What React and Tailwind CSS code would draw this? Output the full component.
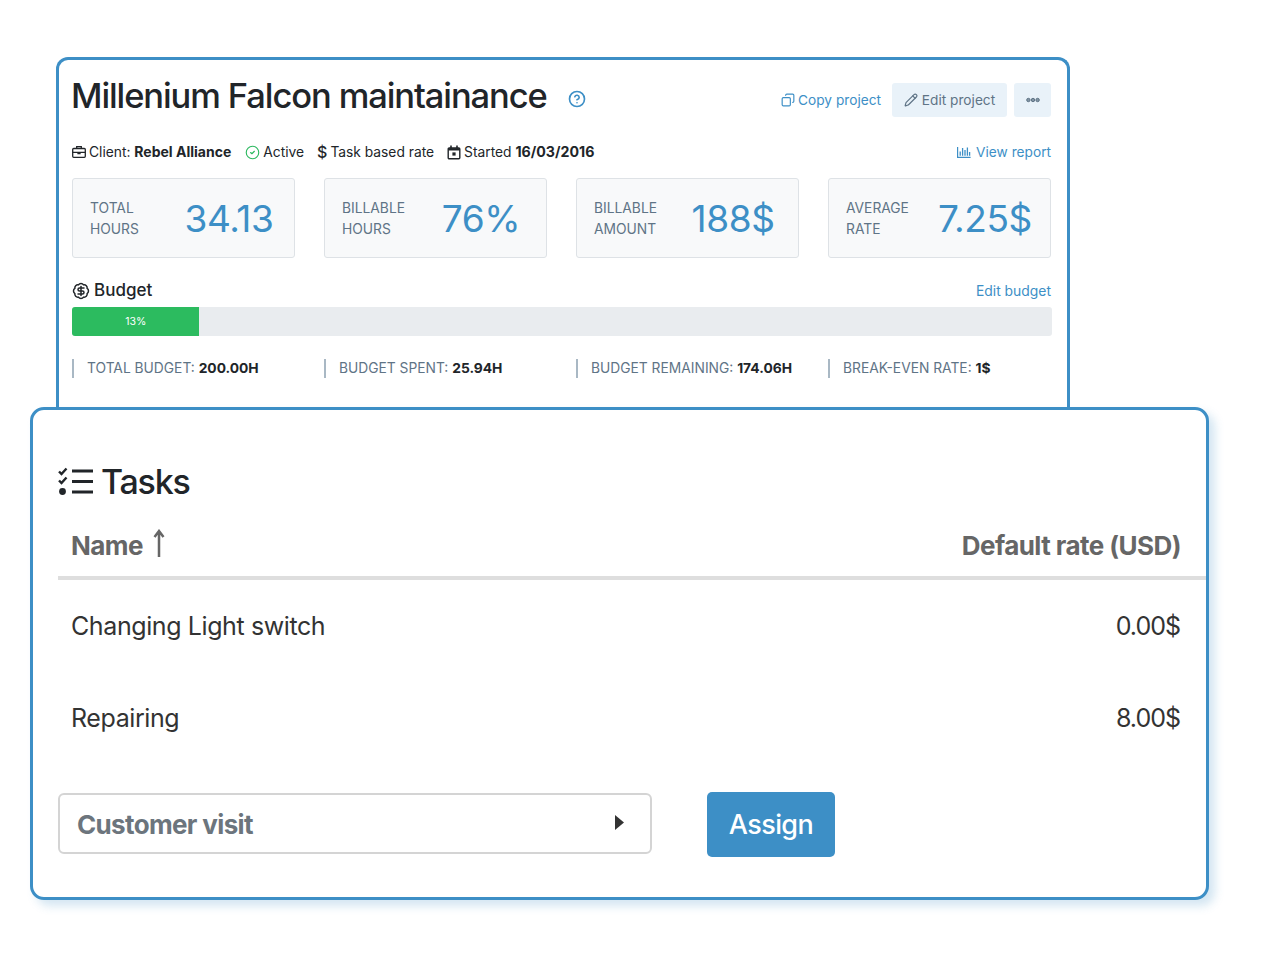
import React from "react";
import { CircleCheck, Copy, Pencil, CircleHelp, BadgeDollarSign } from "lucide-react";

function Stat({ a, b, v }) {
  return (
    <div className="w-[223px] h-[80px] bg-[#f8f9fa] border border-[#dee2e6] rounded-[3px] flex items-center">
      <div className="w-[91px] pl-[17px] pt-[2px] text-[13.8px] leading-[21px] text-[#5f7486]">
        <div>{a}</div>
        <div>{b}</div>
      </div>
      <div className="flex-1 pt-[1px] text-center text-[37px] leading-none tracking-[-0.4px] text-[#3d8fc6]">{v}</div>
    </div>
  );
}

function Fact({ label, value }) {
  return (
    <div className="w-[252px] shrink-0 h-[20px] flex items-center">
      <div className="w-[2px] h-[19px] bg-[#a9b8c4]" />
      <div className="ml-[13px] text-[13.8px] text-[#5f7486] whitespace-nowrap">
        {label}: <b className="font-bold text-[#212529]">{value}</b>
      </div>
    </div>
  );
}

function ChecklistIcon() {
  return (
    <svg width="36" height="30" viewBox="0 0 36 30" fill="none" stroke="#212529" strokeWidth="3">
      <path d="M1 4.5l2.5 2.5L8.5 1.5" strokeWidth="2.4" />
      <path d="M1 13.5l2.5 2.5 5-5.5" strokeWidth="2.4" />
      <circle cx="4.5" cy="24.5" r="3.4" fill="#212529" stroke="none" />
      <path d="M14 4h21M14 14.5h21M14 25h21" />
    </svg>
  );
}

function CaseIcon() {
  return (
    <svg className="mr-[3px]" width="14" height="14" viewBox="0 0 14 14" fill="none" stroke="#212529" strokeWidth="1.3">
      <rect x="0.7" y="3.5" width="12.6" height="8.8" rx="1" />
      <path d="M4.7 3.5V1.7h4.6v1.8M0.7 7.3h12.6M6 7.3v1.4h2V7.3" />
    </svg>
  );
}

function CalIcon() {
  return (
    <svg className="mr-[3px]" width="14" height="15" viewBox="0 0 14 15" fill="none" stroke="#212529" strokeWidth="1.4">
      <rect x="1.2" y="3" width="11.6" height="10.8" rx="1" />
      <path d="M1.2 4.3h11.6" strokeWidth="2.4" />
      <path d="M4 0.6v2.6M10 0.6v2.6" strokeWidth="1.6" />
      <rect x="5.4" y="7.4" width="3.2" height="3.2" fill="#212529" stroke="none" />
    </svg>
  );
}

function ReportIcon() {
  return (
    <svg className="mr-[5px]" width="14" height="14" viewBox="0 0 14 14" fill="none" stroke="#3d8fc6" strokeWidth="1.2">
      <path d="M0.6 2v10.4h13" />
      <path d="M3.2 10.8V6.4M5.6 10.8V3M8 10.8V5M10.4 10.8V2.4M12.6 10.8V7" strokeWidth="1.3" />
    </svg>
  );
}

function DotsIcon() {
  return (
    <svg width="14" height="6" viewBox="0 0 14 6" fill="#8395a4" stroke="#5f7486" strokeWidth="1">
      <circle cx="2.4" cy="3" r="1.7" />
      <circle cx="7" cy="3" r="1.7" />
      <circle cx="11.6" cy="3" r="1.7" />
    </svg>
  );
}

export default function App() {
  return (
    <div className="w-[1272px] h-[973px] bg-white pt-[57px] overflow-hidden font-['Inter','Liberation_Sans',sans-serif] text-[#212529]">
      <div className="ml-[56px] w-[1014px] h-[350px] border-[3px] border-b-0 border-[#3d8fc6] rounded-t-[12px] pl-[13px] pr-[15px]">
        <div className="flex items-center justify-between h-[71px] pt-[1px]">
          <div className="flex items-center -ml-[1px]">
            <div className="text-[34.5px] leading-none font-medium tracking-[-1.1px] whitespace-nowrap">Millenium Falcon maintainance</div>
            <CircleHelp className="ml-[21px] mt-[5px] w-[18px] h-[18px] text-[#3d8fc6]" strokeWidth={2.2} />
          </div>
          <div className="flex items-center mt-[8px] mr-[1px]">
            <div className="flex items-center text-[13.7px] text-[#3d8fc6]">
              <Copy className="w-[14px] h-[14px] mr-[3px] scale-x-[-1]" strokeWidth={2} />
              Copy project
            </div>
            <div className="ml-[11px] h-[34px] w-[115px] rounded-[3px] bg-[#e9f2f9] flex items-center justify-center text-[13.7px] text-[#5f7486]">
              <Pencil className="w-[14px] h-[14px] mr-[4px]" strokeWidth={2} />
              Edit project
            </div>
            <div className="ml-[7px] h-[34px] w-[37px] rounded-[3px] bg-[#e9f2f9] flex items-center justify-center">
              <DotsIcon />
            </div>
          </div>
        </div>
        <div className="flex items-center justify-between h-[22px] mt-[10px] text-[13.8px]">
          <div className="flex items-center whitespace-nowrap">
            <CaseIcon />
            <span>Client: <b className="font-bold text-[14px]">Rebel Alliance</b></span>
            <CircleCheck className="ml-[14px] w-[15px] h-[15px] text-[#2cb85f] mr-[3px]" strokeWidth={1.8} />
            <span>Active</span>
            <span className="ml-[13px] mr-[3px] text-[16px] leading-none font-medium">$</span>
            <span>Task based rate</span>
            <span className="ml-[13px]"><CalIcon /></span>
            <span>Started <b className="font-bold text-[14.2px]">16/03/2016</b></span>
          </div>
          <div className="flex items-center text-[13.7px] text-[#3d8fc6] mr-[1px]">
            <ReportIcon />
            View report
          </div>
        </div>
        <div className="flex gap-[29px] mt-[15px]">
          <Stat a="TOTAL" b="HOURS" v="34.13" />
          <Stat a="BILLABLE" b="HOURS" v="76%" />
          <Stat a="BILLABLE" b="AMOUNT" v="188$" />
          <Stat a="AVERAGE" b="RATE" v="7.25$" />
        </div>
        <div className="flex items-center justify-between mt-[22px] h-[22px]">
          <div className="flex items-center text-[17px] font-medium">
            <BadgeDollarSign className="w-[18px] h-[18px] mr-[4px]" strokeWidth={2} />
            Budget
          </div>
          <div className="text-[13.9px] text-[#3d8fc6] mr-[1px]">Edit budget</div>
        </div>
        <div className="mt-[5px] h-[29px] rounded-[3px] bg-[#e9ecef] overflow-hidden">
          <div className="w-[13%] h-full bg-[#2cbb5f] flex items-center justify-center text-[10.5px] text-white">13%</div>
        </div>
        <div className="flex mt-[22px]">
          <Fact label="TOTAL BUDGET" value="200.00H" />
          <Fact label="BUDGET SPENT" value="25.94H" />
          <Fact label="BUDGET REMAINING" value="174.06H" />
          <Fact label="BREAK-EVEN RATE" value="1$" />
        </div>
      </div>
      <div className="relative ml-[30px] w-[1179px] h-[493px] bg-white border-[3px] border-[#3d8fc6] rounded-[14px] shadow-[6px_6px_10px_rgba(61,143,198,0.22)]">
        <div className="flex items-center ml-[25px] mt-[53px]">
          <ChecklistIcon />
          <div className="ml-[7px] text-[34px] leading-[38px] font-medium tracking-[-1.2px]">Tasks</div>
        </div>
        <div className="flex items-end justify-between ml-[38px] mr-[25px] mt-[25px] h-[36px] text-[26px] leading-[32px] font-bold tracking-[-0.55px] text-[#666666]">
          <div className="flex items-end">
            Name
            <svg className="ml-[10px] mb-[5px]" width="12" height="28" viewBox="0 0 12 28" fill="none" stroke="#666666" strokeWidth="2.5">
              <path d="M6 28V3M1.5 8L6 2l4.5 6" />
            </svg>
          </div>
          <div>Default rate (USD)</div>
        </div>
        <div className="ml-[25px] mt-[14px] h-[4px] bg-[#dedede]" />
        <div className="flex items-center justify-between ml-[38px] mr-[26px] mt-[25px] h-[44px] text-[25px] tracking-[-0.4px] text-[#333333]">
          <div>Changing Light switch</div>
          <div className="tracking-[-1px]">0.00$</div>
        </div>
        <div className="flex items-center justify-between ml-[38px] mr-[26px] mt-[48px] h-[44px] text-[25px] tracking-[-0.4px] text-[#333333]">
          <div>Repairing</div>
          <div className="tracking-[-1px]">8.00$</div>
        </div>
        <div className="flex items-start ml-[25px] mt-[51px]">
          <div className="mt-[1px] w-[594px] h-[61px] border-[2px] border-[#d4d4d4] rounded-[6px] flex items-center justify-between pt-[2px] pl-[17px] pr-[26px] text-[26px] font-bold tracking-[-0.65px] text-[#6c757d]">
            Customer visit
            <svg width="9" height="15" viewBox="0 0 9 15" className="mb-[4px]"><path d="M0 0l9 7.5L0 15z" fill="#333333" /></svg>
          </div>
          <div className="ml-[55px] w-[128px] h-[65px] pt-[2px] rounded-[5px] bg-[#3d8fc6] flex items-center justify-center text-[27px] font-medium tracking-[-0.6px] text-white">Assign</div>
        </div>
      </div>
    </div>
  );
}
